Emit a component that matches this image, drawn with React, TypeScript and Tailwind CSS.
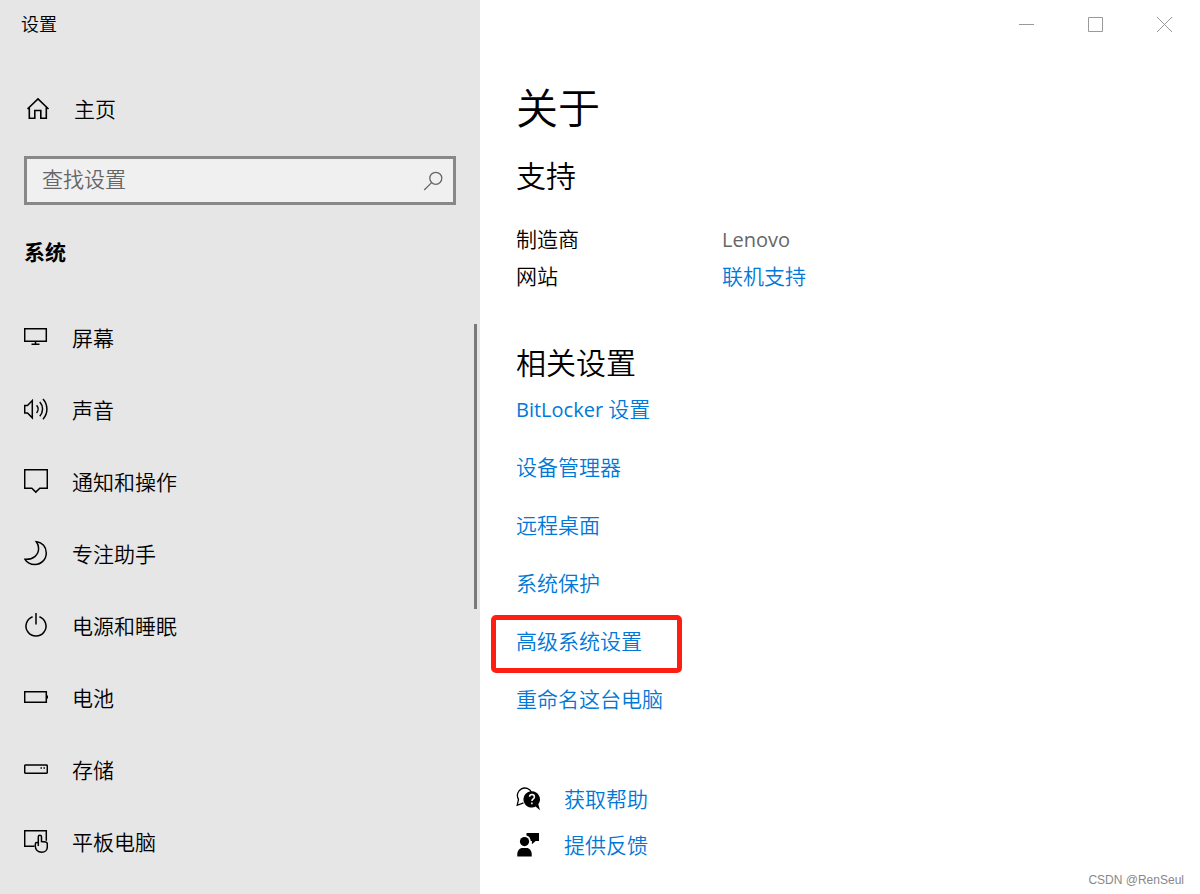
import { useState } from "react";
import type { ReactNode } from "react";

// ===================== ICONS =====================
function NavIcon({ children }: { children: ReactNode }) {
  return (
    <svg
      className="w-6 h-7 shrink-0"
      viewBox="0 0 24 28"
      fill="none"
      stroke="currentColor"
      strokeWidth="1.5"
      aria-hidden="true"
    >
      {children}
    </svg>
  );
}

const navItems = [
  {
    label: "屏幕",
    icon: (
      <NavIcon>
        <path d="M.7 4.7h21.6v12.6H.7zM11.5 17.5v3M7.5 20.3h8" />
      </NavIcon>
    ),
  },
  {
    label: "声音",
    icon: (
      <NavIcon>
        <path d="M.7 9.5h2.8L8.3 4.6v17.2l-4.8-4.9H.7z" />
        <path d="M12.6 9.2a6 6 0 0 1 0 7.8M15.8 6a10.5 10.5 0 0 1 0 14.2M19 3a15 15 0 0 1 0 20.2" />
      </NavIcon>
    ),
  },
  {
    label: "通知和操作",
    icon: (
      <NavIcon>
        <path d="M.7 1.7h22.6v18.6h-7.5l-4 3.8-4-3.8H.7z" />
      </NavIcon>
    ),
  },
  {
    label: "专注助手",
    icon: (
      <NavIcon>
        <path d="M12.3 1.7C18.4 2.4 22.3 7 22.3 13c0 6.4-5 11.4-11.4 11.4-4.4 0-8-1.9-9.9-5.1 8 .6 13.6-4.3 13.6-10.8 0-2.7-.8-4.9-2.3-6.8z" />
      </NavIcon>
    ),
  },
  {
    label: "电源和睡眠",
    icon: (
      <NavIcon>
        <path d="M12 1v11.5M8.6 4.7a10 10 0 1 0 6.8 0" />
      </NavIcon>
    ),
  },
  {
    label: "电池",
    icon: (
      <NavIcon>
        <path d="M.7 7.7h21.6v10.6H.7z" />
        <path d="M23.3 11.5v3" />
      </NavIcon>
    ),
  },
  {
    label: "存储",
    icon: (
      <NavIcon>
        <rect x=".7" y="9" width="22.6" height="8.3" rx="1" />
        <path d="M16.5 12h1.4M19.5 12h1.4" />
      </NavIcon>
    ),
  },
  {
    label: "平板电脑",
    icon: (
      <NavIcon>
        <path d="M10.5 18.3H.7V2.7h21.6v10" />
        <path d="M14.3 18V8.8a1.6 1.6 0 0 1 3.2 0v4.700l4.2.6c1 .2 1.600.8 1.600 1.800v3c0 3.200-2.300 5.300-5.600 5.300-3.800 0-6.400-2.500-6.400-6.200v-1.800c0-1.100.6-1.700 1.600-1.700h1.400" />
      </NavIcon>
    ),
  },
];

function HomeIcon() {
  return (
    <svg className="w-[26px] h-7" viewBox="0 0 26 28" fill="none" stroke="currentColor" strokeWidth="1.6" aria-hidden="true">
      <path d="M3.5 14L14 3.9 24.5 14M5.3 12.5v10.7h5.500V15.500h6v7.700h5.500V12.500" />
    </svg>
  );
}

function SearchIcon() {
  return (
    <svg className="w-5 h-5" viewBox="0 0 20 20" fill="none" stroke="currentColor" strokeWidth="1.3" aria-hidden="true">
      <circle cx="12.8" cy="7.3" r="6" />
      <path d="M8.6 11.6L1.2 19" />
    </svg>
  );
}

function HelpIcon() {
  return (
    <svg className="w-6 h-6" viewBox="0 0 24 24" aria-hidden="true">
      <path
        d="M15.6 5.5A7.400 7.400 0 1 0 2.500 12.300L1.200 18.300l6.300-2.500"
        fill="none"
        stroke="currentColor"
        strokeWidth="1.3"
      />
      <path d="M15.800 4.200a8.200 8.200 0 1 0 3.800 15.400l4.400 3.700-1.700-6A8.200 8.200 0 0 0 15.800 4.200z" fill="currentColor" />
      <path d="M13.500 9.800c.2-3 4.900-2.900 4.900.1 0 2-2.500 2-2.500 4.200M15.900 15.600v1.700" fill="none" stroke="#fff" strokeWidth="1.5" />
    </svg>
  );
}

function FeedbackIcon() {
  return (
    <svg className="w-6 h-6" viewBox="0 0 24 24" fill="currentColor" aria-hidden="true">
      <circle cx="8.500" cy="8.600" r="4.600" />
      <path d="M1.300 23.500v-2.300c0-3.600 2.200-6.200 5.200-6.200h4c3 0 5.200 2.600 5.200 6.200v2.300z" />
      <path d="M10.500 0H23v8h-3.300l-3.800 3.200V8h-1.200c0-2.800-1.500-5-4.200-5.600z" />
    </svg>
  );
}

const relatedLinks = [
  { name: "BitLocker", label: "设置" },
  { label: "设备管理器" },
  { label: "远程桌面" },
  { label: "系统保护" },
  { label: "高级系统设置", marked: true },
  { label: "重命名这台电脑" },
];

export default function App() {
  const [query, setQuery] = useState("");

  return (
    <div className="min-h-screen flex bg-white text-black text-[21px] leading-8 font-[350] font-['Open_Sans','Noto_Sans_CJK_SC',sans-serif]">

      {/* ===================== SIDEBAR ===================== */}
      <aside className="w-2/5 shrink-0 bg-[#e6e6e6]">
        <div className="h-12 px-[21px] flex items-center text-lg">设置</div>

        <div className="px-6 pt-[37px]">
          <a href="#home" className="h-12 flex items-center gap-6">
            <HomeIcon />
            主页
          </a>

          <label className="mt-[23px] h-[49px] flex items-center border-3 border-[#888] bg-[#f0f0f0] pl-[15px] pr-[10px] text-[#666]">
            <input
              type="text"
              aria-label="查找设置"
              placeholder="查找设置"
              value={query}
              onChange={(e) => setQuery(e.target.value)}
              className="min-w-0 flex-1 pb-1 bg-transparent outline-none placeholder:text-[#666]"
            />
            <SearchIcon />
          </label>

          <h2 className="mt-[31px] font-bold">系统</h2>
        </div>

        <div className="mt-[34px] pr-[3px] flex">
          <nav className="flex-1">
            {navItems.map((item) => (
              <a key={item.label} href="#system" className="h-18 px-6 flex items-center gap-6">
                {item.icon}
                {item.label}
              </a>
            ))}
          </nav>
          {/* scroll thumb */}
          <div className="mt-[22px] w-[3px] h-[285px] bg-[#7a7a7a]"></div>
        </div>
      </aside>

      {/* ===================== MAIN CONTENT ===================== */}
      <main className="flex-1 min-w-0 flex flex-col">

        {/* ---------- WINDOW BUTTONS ---------- */}
        <div className="h-12 pr-px flex justify-end text-[#999]">
          <button aria-label="最小化" className="w-[69px] flex items-center justify-center">
            <svg className="w-[15px] h-[15px]" viewBox="0 0 15 15" stroke="currentColor" aria-hidden="true">
              <path d="M0 7.5h15" />
            </svg>
          </button>
          <button aria-label="最大化" className="w-[69px] flex items-center justify-center">
            <svg className="w-[15px] h-[15px]" viewBox="0 0 15 15" fill="none" stroke="currentColor" aria-hidden="true">
              <path d="M.5.5h14v14H.5z" />
            </svg>
          </button>
          <button aria-label="关闭" className="w-[69px] flex items-center justify-center">
            <svg className="w-[15px] h-[15px]" viewBox="0 0 15 15" stroke="currentColor" aria-hidden="true">
              <path d="M0 0l15 15M15 0L0 15" />
            </svg>
          </button>
        </div>

        <div className="px-9 pt-8">
          <h1 className="text-[42px] leading-14">关于</h1>

          <h2 className="mt-5 text-3xl leading-10">支持</h2>
          <dl className="mt-[25px] grid grid-cols-[206px_1fr] leading-[37px]">
            <dt>制造商</dt>
            <dd className="text-xl leading-[37px] font-normal text-[#666]">Lenovo</dd>
            <dt>网站</dt>
            <dd>
              <a href="#support" className="text-[#0078d7]">联机支持</a>
            </dd>
          </dl>

          {/* ---------- RELATED SETTINGS ---------- */}
          <h2 className="mt-[51px] text-3xl leading-[34px]">相关设置</h2>
          <ul className="text-[#0078d7]">
            {relatedLinks.map((link) => (
              <li key={link.label} className="relative h-[58px] flex items-center">
                <a href="#related">
                  {link.name && <span className="text-xl font-normal">{link.name} </span>}
                  {link.label}
                </a>
                {link.marked && (
                  <span className="absolute -left-[25px] top-[3px] w-[191px] h-[58px] border-5 border-[#ff1e12] rounded-[5px]"></span>
                )}
              </li>
            ))}
          </ul>

          {/* ---------- HELP ---------- */}
          <div className="mt-12 text-[#0078d7]">
            <a href="#help" className="h-[46px] flex items-center gap-6">
              <span className="text-black"><HelpIcon /></span>
              获取帮助
            </a>
            <a href="#feedback" className="h-[46px] flex items-center gap-6">
              <span className="text-black"><FeedbackIcon /></span>
              提供反馈
            </a>
          </div>
        </div>

        <p className="mt-auto pr-4 pb-1 text-right text-xs leading-5 font-normal text-[#888] font-['Liberation_Sans',sans-serif]">
          CSDN @RenSeul
        </p>
      </main>
    </div>
  );
}
